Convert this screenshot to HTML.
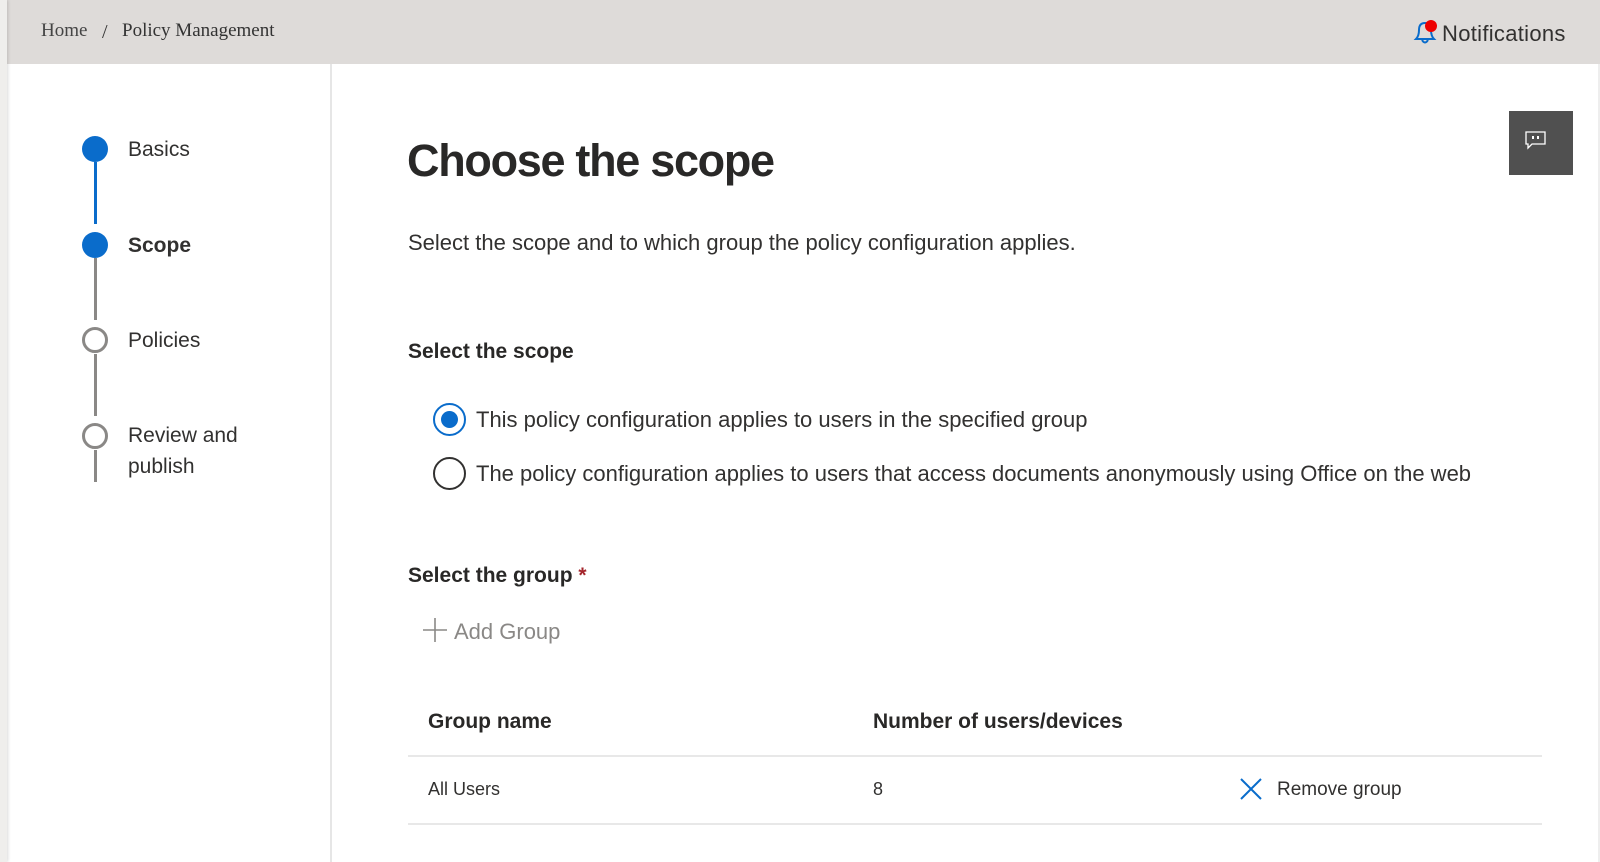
<!DOCTYPE html>
<html><head><meta charset="utf-8"><style>
*{margin:0;padding:0;box-sizing:border-box}
body{width:1600px;height:862px;overflow:hidden;background:#fff;font-family:"Liberation Sans",sans-serif;color:#323130;position:relative}
.a{position:absolute;white-space:nowrap}
.hdr{position:absolute;left:0;top:0;width:1600px;height:64px;background:#dedbd9}
.lstrip{position:absolute;left:0;top:0;width:7px;height:862px;background:#efeeec;box-shadow:1px 0 3px rgba(0,0,0,.15)}
.side{position:absolute;left:330px;top:64px;width:2px;height:798px;background:#e6e6e6}
.rstrip{position:absolute;left:1598px;top:64px;width:2px;height:798px;background:#eee}
.dot{position:absolute;width:26px;height:26px;border-radius:50%;left:82px}
.fill{background:#0a6ccb}
.ring{border:3px solid #8a8886;background:#fff}
.ln{position:absolute;left:94px;width:3px}
.st{position:absolute;left:128px;font-size:21px;color:#323130}
</style></head><body>
<div class="hdr"></div>
<div class="lstrip"></div>
<div class="a" style="left:41px;top:20px;font-family:'Liberation Serif',serif;font-size:19px;color:#444">Home</div>
<div class="a" style="left:102px;top:21px;font-family:'Liberation Serif',serif;font-size:20px;color:#333">/</div>
<div class="a" style="left:122px;top:20px;font-family:'Liberation Serif',serif;font-size:19px;color:#333">Policy Management</div>
<svg class="a" style="left:1410px;top:18px" width="30" height="28" viewBox="0 0 30 28"><path d="M6 21 Q9 18 9 12 Q9 5 15 5 Q21 5 21 12 Q21 18 24 21 Z" fill="none" stroke="#0a6ccb" stroke-width="2"/><path d="M12 22 Q15 27 18 22" fill="none" stroke="#0a6ccb" stroke-width="2"/><circle cx="21" cy="8" r="6" fill="#e00"/></svg>
<div class="a" style="left:1442px;top:21px;font-size:22px;color:#323130;letter-spacing:0.3px">Notifications</div>
<div class="side"></div><div class="rstrip"></div>
<div class="a" style="left:1509px;top:111px;width:64px;height:64px;background:#505050"></div>
<svg class="a" style="left:1524px;top:130px" width="24" height="22" viewBox="0 0 24 22"><path d="M2 2 H21 V14 H8 L4 18 V14 H2 Z" fill="none" stroke="#fff" stroke-width="1.3"/><rect x="8" y="6" width="2" height="3" fill="#fff"/><rect x="13" y="6" width="2" height="3" fill="#fff"/></svg>

<div class="ln" style="top:162px;height:62px;background:#0a6ccb"></div>
<div class="ln" style="top:258px;height:62px;background:#8a8886"></div>
<div class="ln" style="top:354px;height:62px;background:#8a8886"></div>
<div class="ln" style="top:450px;height:32px;background:#8a8886"></div>
<div class="dot fill" style="top:136px"></div>
<div class="dot fill" style="top:232px"></div>
<div class="dot ring" style="top:327px"></div>
<div class="dot ring" style="top:423px"></div>
<div class="st" style="top:138px">Basics</div>
<div class="st" style="top:234px;font-weight:bold">Scope</div>
<div class="st" style="top:329px">Policies</div>
<div class="st" style="line-height:31px;top:420px">Review and<br>publish</div>

<div class="a" style="left:407px;top:135px;font-size:45px;font-weight:bold;color:#292827;letter-spacing:-1.3px">Choose the scope</div>
<div class="a" style="left:408px;top:230px;font-size:22px">Select the scope and to which group the policy configuration applies.</div>
<div class="a" style="left:408px;top:340px;font-size:21px;font-weight:bold;color:#292827">Select the scope</div>
<div class="a" style="left:433px;top:403px;width:33px;height:33px;border-radius:50%;border:2px solid #0a6ccb"></div>
<div class="a" style="left:441px;top:411px;width:17px;height:17px;border-radius:50%;background:#0a6ccb"></div>
<div class="a" style="left:476px;top:407px;font-size:22px">This policy configuration applies to users in the specified group</div>
<div class="a" style="left:433px;top:457px;width:33px;height:33px;border-radius:50%;border:2px solid #323130"></div>
<div class="a" style="left:476px;top:461px;font-size:22px">The policy configuration applies to users that access documents anonymously using Office on the web</div>
<div class="a" style="left:408px;top:564px;font-size:21px;font-weight:bold;color:#292827">Select the group <span style="color:#a4262c">*</span></div>
<svg class="a" style="left:422px;top:617px" width="26" height="26"><path d="M13 1V25M1 13H25" stroke="#8a8886" stroke-width="1.6"/></svg>
<div class="a" style="left:454px;top:619px;font-size:22px;color:#8a8886">Add Group</div>
<div class="a" style="left:428px;top:710px;font-size:21px;font-weight:bold;color:#292827">Group name</div>
<div class="a" style="left:873px;top:710px;font-size:21px;font-weight:bold;color:#292827">Number of users/devices</div>
<div class="a" style="left:408px;top:755px;width:1134px;height:2px;background:#e8e8e8"></div>
<div class="a" style="left:428px;top:779px;font-size:18px">All Users</div>
<div class="a" style="left:873px;top:779px;font-size:18px">8</div>
<svg class="a" style="left:1240px;top:778px" width="22" height="22"><path d="M1 1L21 21M21 1L1 21" stroke="#0a6ccb" stroke-width="2"/></svg>
<div class="a" style="left:1277px;top:779px;font-size:19px">Remove group</div>
<div class="a" style="left:408px;top:823px;width:1134px;height:2px;background:#e8e8e8"></div>
</body></html>
